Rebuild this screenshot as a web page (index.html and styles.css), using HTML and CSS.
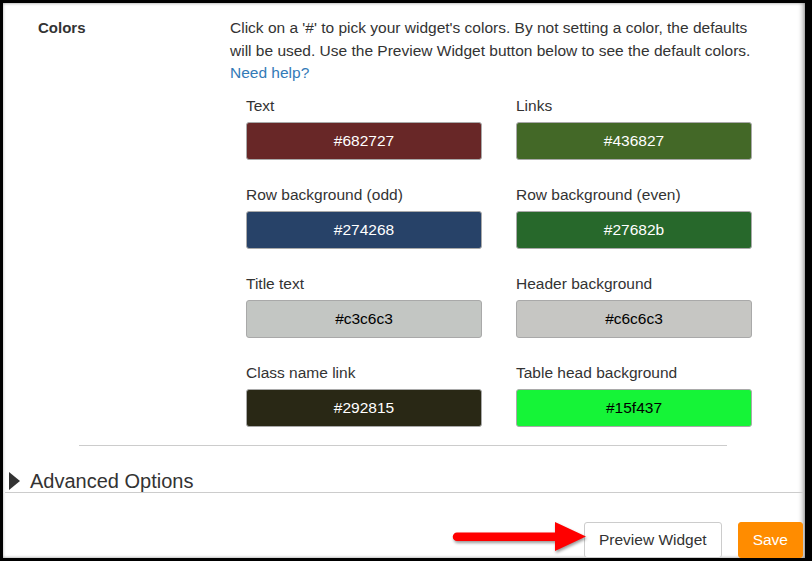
FILE: index.html
```html
<!DOCTYPE html>
<html>
<head>
<meta charset="utf-8">
<link rel="stylesheet" href="styles.css">
</head>
<body>
<div class="frame">
  <div class="row">
    <div class="label">Colors</div>
    <div class="content">
      <p class="desc">Click on a '#' to pick your widget's colors. By not setting a color, the defaults will be used. Use the Preview Widget button below to see the default colors.<br><a class="help" href="#">Need help?</a></p>
      <div class="grid">
        <div class="field"><div class="flabel">Text</div><div class="swatch dark" style="background:#682727">#682727</div></div>
        <div class="field"><div class="flabel">Links</div><div class="swatch dark" style="background:#436827">#436827</div></div>
        <div class="field"><div class="flabel">Row background (odd)</div><div class="swatch dark" style="background:#274268">#274268</div></div>
        <div class="field"><div class="flabel">Row background (even)</div><div class="swatch dark" style="background:#27682b">#27682b</div></div>
        <div class="field"><div class="flabel">Title text</div><div class="swatch light" style="background:#c3c6c3">#c3c6c3</div></div>
        <div class="field"><div class="flabel">Header background</div><div class="swatch light" style="background:#c6c6c3">#c6c6c3</div></div>
        <div class="field"><div class="flabel">Class name link</div><div class="swatch dark" style="background:#292815">#292815</div></div>
        <div class="field"><div class="flabel">Table head background</div><div class="swatch light" style="background:#15f437">#15f437</div></div>
      </div>
    </div>
  </div>
  <hr class="sep">
  <div class="advanced"><span class="tri"></span><span>Advanced Options</span></div>
  <div class="actions">
    <button class="btn btn-default">Preview Widget</button>
    <button class="btn btn-save">Save</button>
  </div>
  <svg class="arrow" width="140" height="40" viewBox="0 0 140 40">
    <path d="M6 11.5 H104 V1 L135 15.5 L104 30 V20 H6 A4.25 4.25 0 0 1 6 11.5 Z" fill="#ff0000"/>
  </svg>
</div>
</body>
</html>
```
FILE: styles.css
```css
html, body {
  margin: 0;
  padding: 0;
  background: #000;
}
body {
  font-family: "Liberation Sans", Arial, sans-serif;
  color: #333;
  font-size: 15.5px;
}
.frame {
  position: relative;
  margin: 3px 0 0 3px;
  width: 802px;
  height: 555px;
  background: #fff;
  overflow: hidden;
  box-shadow: inset 0 0 3px rgba(0,0,0,0.35), inset -4px 0 4px -1px rgba(0,0,0,0.25);
}
.row {
  display: grid;
  grid-template-columns: 192px 1fr;
  padding: 14px 0 0 35px;
}
.label {
  font-weight: bold;
  font-size: 15px;
  line-height: 22.5px;
}
.content {
  width: 525px;
}
.desc {
  margin: 0 0 10px 0;
  line-height: 22.5px;
}
.help {
  color: #337ab7;
  text-decoration: none;
}
.grid {
  display: grid;
  grid-template-columns: 236px 236px;
  column-gap: 34px;
  row-gap: 24px;
  margin-left: 16px;
}
.flabel {
  line-height: 22px;
  margin-bottom: 5px;
}
.swatch {
  box-sizing: border-box;
  height: 38px;
  border: 1px solid #a9a9a9;
  border-radius: 3px;
  display: flex;
  align-items: center;
  justify-content: center;
  font-size: 15.5px;
}
.swatch.dark { color: #fff; }
.swatch.light { color: #000; }
.sep {
  border: 0;
  border-top: 1px solid #ccc;
  margin: 18px 78px 0 76px;
  height: 0;
}
.advanced {
  display: flex;
  align-items: center;
  gap: 10px;
  margin: 24px 2px 0 2px;
  padding-left: 4px;
  font-size: 20px;
  line-height: 22px;
  border-bottom: 1px solid #ccc;
}
.tri {
  width: 0;
  height: 0;
  border-left: 11px solid #333;
  border-top: 9px solid transparent;
  border-bottom: 9px solid transparent;
}
.actions {
  display: flex;
  justify-content: flex-end;
  gap: 16px;
  margin-top: 29px;
  padding-right: 2px;
}
.btn {
  font-family: "Liberation Sans", Arial, sans-serif;
  font-size: 15.5px;
  line-height: 22.5px;
  padding: 6px 14px;
  border-radius: 3px;
  cursor: pointer;
}
.btn-default {
  background: #fff;
  border: 1px solid #ccc;
  color: #333;
}
.btn-save {
  background: #ff8c00;
  border: 1px solid #ff8c00;
  color: #fff;
}
.arrow {
  position: absolute;
  left: 448px;
  top: 518px;
  filter: drop-shadow(1px 2px 1.5px rgba(0,0,0,0.4));
}
```
